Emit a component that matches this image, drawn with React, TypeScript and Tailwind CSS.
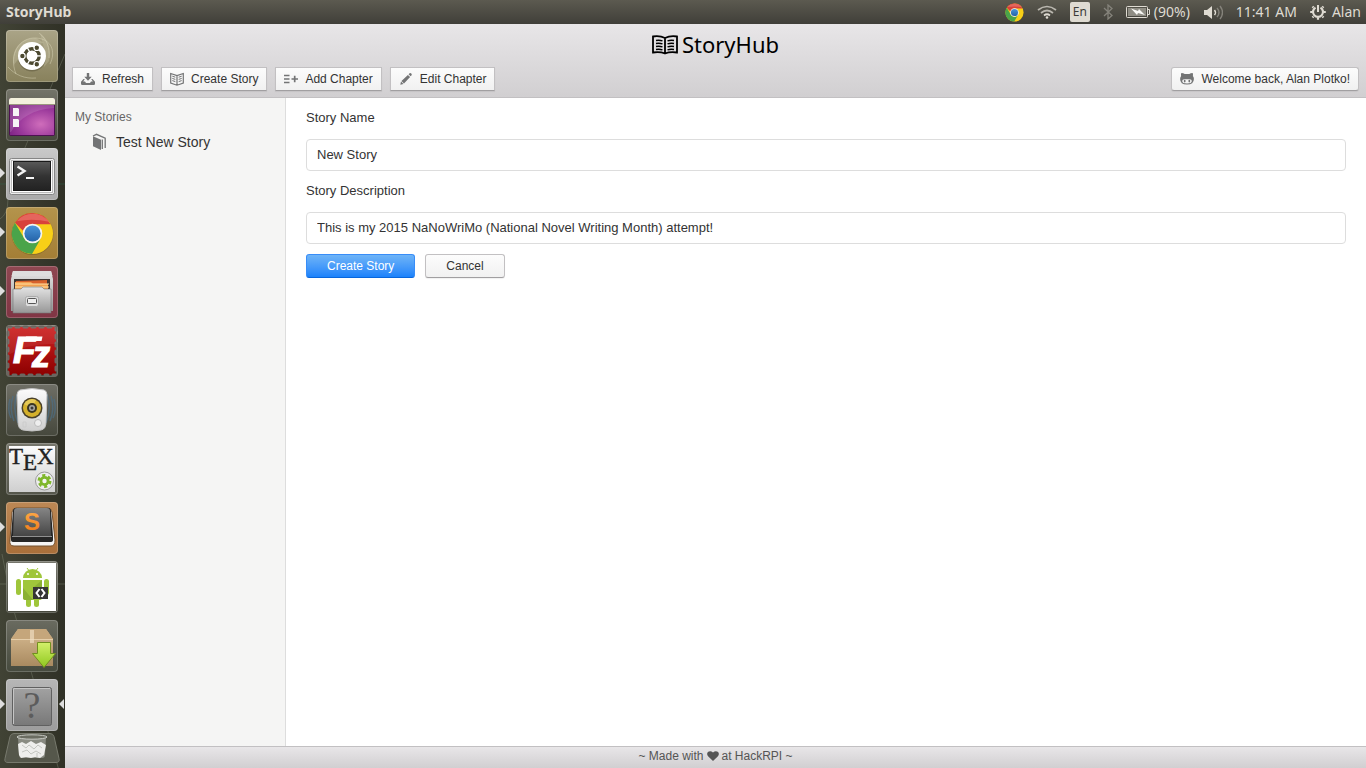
import { useState } from "react";
import type { ReactNode } from "react";

function Chrome({ className = "" }: { className?: string }) {
  return (
    <svg viewBox="0 0 44 44" className={className} aria-hidden="true">
      <circle cx="22" cy="22.500" r="21.500" fill="#5b4a20" opacity=".35" />
      <circle cx="22" cy="22" r="21" fill="#f8cf17" />
      <path d="M4 11A21 21 0 0 1 40.500 12.500H22a10 10 0 0 0-9.500 7z" fill="#d8423a" />
      <path d="M4 11a21 21 0 0 0 17.500 32l8.600-15.200A10 10 0 0 1 13 26z" fill="#4aa44a" />
      <path d="M6 9.500A21 21 0 0 1 39 10q-17-4-33-.5z" fill="#ef7d75" opacity=".6" />
      <circle cx="22" cy="22" r="10" fill="#f4f4f2" />
      <circle cx="22" cy="22" r="8.300" fill="url(#blueBall)" />
    </svg>
  );
}

function Defs() {
  return (
    <svg width="0" height="0" className="absolute" aria-hidden="true">
      <defs>
        <linearGradient id="blueBall" x2="0" y2="1"><stop stopColor="#4a94d8" /><stop offset="1" stopColor="#2463a8" /></linearGradient>
        <radialGradient id="purple" cx=".7" cy=".65" r=".8"><stop stopColor="#cf6dbb" /><stop offset=".6" stopColor="#9c3a9c" /><stop offset="1" stopColor="#7c2382" /></radialGradient>
        <linearGradient id="silver" x2="0" y2="1"><stop stopColor="#e3e3e3" /><stop offset="1" stopColor="#979797" /></linearGradient>
        <linearGradient id="dark" x2="0" y2="1"><stop stopColor="#5a5a5a" /><stop offset=".5" stopColor="#333" /><stop offset="1" stopColor="#222" /></linearGradient>
        <linearGradient id="key" x2="0" y2="1"><stop stopColor="#858585" /><stop offset="1" stopColor="#454545" /></linearGradient>
        <linearGradient id="plate" x2="0" y2="1"><stop stopColor="#a2a2a2" /><stop offset="1" stopColor="#787878" /></linearGradient>
        <linearGradient id="red" x2="0" y2="1"><stop stopColor="#ce2222" /><stop offset="1" stopColor="#8d0000" /></linearGradient>
        <linearGradient id="white" x2="0" y2="1"><stop stopColor="#fcfcfc" /><stop offset="1" stopColor="#cfcfcf" /></linearGradient>
        <linearGradient id="orange" x2="0" y2="1"><stop stopColor="#ffb04e" /><stop offset="1" stopColor="#ee7614" /></linearGradient>
        <linearGradient id="box" x2="0" y2="1"><stop stopColor="#d8bc93" /><stop offset="1" stopColor="#a98a60" /></linearGradient>
        <linearGradient id="lime" x2="0" y2="1"><stop stopColor="#d3f06a" /><stop offset="1" stopColor="#8fc81f" /></linearGradient>
      </defs>
    </svg>
  );
}

function Draw({ children }: { children: ReactNode }) {
  return <svg viewBox="0 0 52 52" className="size-full" aria-hidden="true">{children}</svg>;
}

const DashArt = () => (
  <Draw>
    <g fill="none" stroke="#d6d2b4" strokeOpacity=".5">
      <path d="M10 44C2 24 14 7 30 8s20 14 14 26" />
      <path d="M33 3c8 6 11 15 10 25M2 37c7 8 17 12 28 11" />
    </g>
    <path d="M8 35c-4-16 8-28 22-27l8 5-16 2z" fill="#e2dec2" opacity=".25" />
    <path d="M34 3c8 6 12 16 9 28l-5 6V18z" fill="#e2dec2" opacity=".22" />
    <circle cx="26" cy="27.500" r="14" fill="#4d492f" opacity=".4" />
    <circle cx="26" cy="26" r="14" fill="#fff" />
    <circle cx="26" cy="26" r="7.200" fill="none" stroke="#4c4930" strokeWidth="3.400" />
    <g stroke="#fff" strokeWidth="1.400"><path d="M26 26l9-.1M26 26l-4.500-8M26 26l-4.500 8" /></g>
    <circle cx="26" cy="26" r="5" fill="#fff" />
    <g fill="#4c4930" stroke="#fff" strokeWidth="1.200"><circle cx="16.400" cy="26" r="2.800" /><circle cx="30.800" cy="17.700" r="2.800" /><circle cx="30.800" cy="34.300" r="2.800" /></g>
  </Draw>
);

const DesktopArt = () => (
  <Draw>
    <rect x="3" y="9" width="46" height="38" rx="2" fill="#4d1152" />
    <rect x="4" y="15" width="44" height="31" fill="url(#purple)" />
    <path d="M4 15h44v4C28 20 13 29 5 43H4z" fill="#fff" opacity=".13" />
    <path d="M3 11q0-2 2-2h42q2 0 2 2v4H3z" fill="#f3f1dd" />
    <path d="M3 15.500h46" stroke="#9a977e" />
    <g fill="#f6f3f5"><path d="M7 19h5l1 1v7H7zM7 30h5l1 1v7H7z" /></g>
  </Draw>
);

const TerminalArt = () => (
  <Draw>
    <rect x="3.500" y="10.500" width="45" height="36" rx="2" fill="#eee" stroke="#858585" />
    <rect x="5.500" y="12.500" width="41" height="32" fill="#fff" stroke="#bbb" />
    <rect x="7.500" y="13.500" width="37" height="29" fill="url(#dark)" stroke="#191919" />
    <path d="M11.500 18.500l7 4.500-7 4.500" fill="none" stroke="#f4f4f4" strokeWidth="2.400" />
    <path d="M20 30h8" stroke="#f4f4f4" strokeWidth="2.200" />
  </Draw>
);

const ChromeArt = () => <div className="flex size-full items-center justify-center"><Chrome className="size-[43px]" /></div>;

const FilesArt = () => (
  <Draw>
    <path d="M7 5h38l2 8v32H5V13z" fill="url(#silver)" />
    <path d="M7 5h38l1.500 5h-41z" fill="#dedede" />
    <path d="M8 13h36v13H8z" fill="#3d3532" />
    <path d="M10 15l31-1v8H10z" fill="#d8622c" /><path d="M9 16h16l2 2h15v7H9z" fill="#f4a252" /><path d="M9 18h34M9 21h34" stroke="#ffe1a2" />
    <path d="M7 23h8l2-2h19l2 2h7v24H7z" fill="url(#silver)" stroke="#777" strokeOpacity=".6" />
    <rect x="19.500" y="30.500" width="13" height="10" rx="2" fill="#ddd" stroke="#aaa" />
    <rect x="21.500" y="32.500" width="9" height="5" rx="1" fill="#eee" stroke="#555" />
  </Draw>
);

const FileZillaArt = () => (
  <Draw>
    <rect x="2" y="2" width="48" height="48" fill="url(#red)" />
    <rect x="2" y="2" width="48" height="48" fill="none" stroke="#6c655f" strokeWidth="3" strokeDasharray="3 5" strokeLinecap="round" />
    <path d="M2 2h48v17Q22 18 2 30z" fill="#fff" opacity=".07" />
    <g fill="#fff" stroke="#fff" strokeWidth="1.200" fontFamily="Liberation Sans, sans-serif" fontWeight="bold" fontStyle="italic">
      <text x="7" y="38" fontSize="37">F</text><text x="26" y="42" fontSize="36">z</text>
    </g>
    <path d="M20 11.500h16.500l-1 4.500H19z" fill="#fff" />
  </Draw>
);

const SpeakerArt = () => (
  <Draw>
    <g fill="none" stroke="#4c6f88" strokeWidth="1.500" opacity=".65">
      <path d="M11 10q-5 14 1 29M7 12q-4 13 1 25M4 15q-3 11 1 19M41 10q5 14-1 29M45 12q4 13-1 25M48 15q3 11-1 19" />
    </g>
    <path d="M14 6q12-3 24 0 3 1 3 5l-1 27q0 7-5 8-9 2-18 0-5-1-5-8l-1-27q0-4 3-5z" fill="url(#white)" stroke="#c3c3c3" />
    <circle cx="26" cy="24" r="10.500" fill="#4a412a" /><circle cx="26" cy="24" r="9" fill="#d4b02b" />
    <path d="M26 24l-8-4a9 9 0 0 1 12-4z" fill="#ecd469" opacity=".7" />
    <circle cx="26" cy="24" r="5" fill="#3a3522" /><circle cx="26" cy="24" r="3" fill="#a7a7a3" /><circle cx="26" cy="24" r="1.500" fill="#3a3a38" />
    <circle cx="32" cy="39" r="3.500" fill="#eee" stroke="#bbb" /><path d="M17 38h3v5h-3z" fill="none" stroke="#ccc" />
  </Draw>
);

const TexArt = () => (
  <Draw>
    <rect x="3" y="3" width="46" height="46" fill="url(#white)" />
    <g fill="#222" stroke="#222" strokeWidth=".4" fontFamily="Liberation Serif, serif" fontSize="23">
      <text x="3" y="21">T</text><text x="17" y="27">E</text><text x="31" y="21">X</text>
    </g>
    <circle cx="38.500" cy="38" r="9" fill="#ededed" stroke="#999" />
    <circle cx="38.500" cy="38" r="5" fill="#7fb72c" />
    <circle cx="38.500" cy="38" r="5.500" fill="none" stroke="#7fb72c" strokeWidth="3" strokeDasharray="3 2.760" />
    <circle cx="38.500" cy="38" r="2.200" fill="#f4f4f4" />
  </Draw>
);

const SublimeArt = () => (
  <Draw>
    <path d="M6 10q1-4 4-4h32q3 0 4 4l3 28q0 6-4 6H8q-5 0-4-6z" fill="#f5f5f5" stroke="#73502e" />
    <path d="M7 9q0-3 3-3h32q3 0 3 3l2 25v4q0 2-3 2H8q-3 0-3-2v-4z" fill="#262626" />
    <path d="M8 9q0-3 3-3h30q3 0 3 3l1 25H7z" fill="url(#key)" />
    <path d="M6 34.500h40" stroke="#909090" />
    <text x="26" y="28" textAnchor="middle" fontFamily="Liberation Sans, sans-serif" fontWeight="bold" fontSize="24" fill="url(#orange)">S</text>
  </Draw>
);

const AndroidArt = () => (
  <Draw>
    <path d="M2 2h48v48H2z" fill="#fff" />
    <g fill="#9fc63b">
      <path d="M17 17a9.500 9 0 0 1 19 0z" /><path d="M17 19h19v18q0 2-3 2H20q-3 0-3-2z" />
      <rect x="10" y="18" width="5" height="16" rx="2.500" /><rect x="38" y="18" width="5" height="16" rx="2.500" />
      <rect x="20" y="35" width="5" height="11" rx="2.500" /><rect x="28" y="35" width="5" height="11" rx="2.500" />
    </g>
    <path d="M21 7l3 4M32 7l-3 4" stroke="#9fc63b" />
    <g fill="#fff"><circle cx="22" cy="13" r="1" /><circle cx="31" cy="13" r="1" /></g>
    <path d="M17 27l10 12H20q-3 0-3-2zM28 26l8-7v7z" fill="#7ea42f" opacity=".6" />
    <path d="M27 26h15v12H27z" fill="#353535" />
    <path d="M33.500 28l-3 4 3 4M35.500 28l3 4-3 4" fill="none" stroke="#fff" strokeWidth="2" />
  </Draw>
);

const PackageArt = () => (
  <Draw>
    <path d="M12 9h28l7 10v27H5V19z" fill="url(#box)" />
    <path d="M12 9h28l7 10H5z" fill="#c5a67b" /><path d="M5 19.500h42" stroke="#e6cfab" />
    <path d="M24 10h4v13h-4z" fill="#f1e1c4" opacity=".65" />
    <path d="M31.500 22.500h13v11h5L38 47.500 26.500 33.500h5z" fill="url(#lime)" stroke="#71901e" />
  </Draw>
);

const HelpArt = () => (
  <Draw>
    <rect x="6.500" y="8.500" width="39" height="38" rx="2" fill="url(#plate)" stroke="#606060" />
    <path d="M7.500 45V9.500H44" fill="none" stroke="#c5c5c5" />
    <text x="26" y="39" textAnchor="middle" fontFamily="Liberation Serif, serif" fontSize="38" fill="#5c5c5c">?</text>
  </Draw>
);

type App = { name: string; tint: string; art: () => ReactNode; running?: boolean; focused?: boolean };

const apps: App[] = [
  { name: "Search your computer", tint: "from-[#aaa487] to-[#88815c]", art: DashArt },
  { name: "Show desktop", tint: "from-[#747469] to-[#484a3e]", art: DesktopArt },
  { name: "Terminal", tint: "from-[#c9c9c9] to-[#aaaaaa]", art: TerminalArt, running: true },
  { name: "Chrome", tint: "from-[#b4944c] to-[#a47e35]", art: ChromeArt, running: true },
  { name: "Files", tint: "from-[#8f4751] to-[#803544]", art: FilesArt, running: true },
  { name: "FileZilla", tint: "from-[#77756b] to-[#46483d]", art: FileZillaArt },
  { name: "Music", tint: "from-[#6f6f66] to-[#46483d]", art: SpeakerArt },
  { name: "TeX editor", tint: "from-[#77776d] to-[#55564b]", art: TexArt },
  { name: "Sublime Text", tint: "from-[#bc8855] to-[#a96f3a]", art: SublimeArt, running: true },
  { name: "Android tools", tint: "from-[#77776d] to-[#46483d]", art: AndroidArt },
  { name: "Package installer", tint: "from-[#6a6b60] to-[#464a3e]", art: PackageArt },
  { name: "StoryHub", tint: "from-[#b6b6b6] to-[#9c9c9c]", art: HelpArt, running: true, focused: true },
];

function Launcher() {
  return (
    <nav aria-label="Launcher" className="relative flex w-[65px] shrink-0 flex-col items-center gap-[7px] overflow-hidden bg-linear-to-r from-[#414335] via-[#38392d] to-[#303126] pt-1.5 pr-px">
      <svg className="absolute inset-0 size-full" viewBox="0 0 65 744" preserveAspectRatio="none" aria-hidden="true">
        <g fill="none" stroke="#8b9580" strokeOpacity=".35"><path d="M65 30L18 140M0 195q8-5 8-20M0 560h65M2 530l10 50 48 170" /><path d="M0 160h65" stroke="#28765a" /></g>
      </svg>
      {apps.map(({ name, tint, art: Art, running, focused }) => (
        <div key={name} className="relative flex w-full shrink-0 justify-center">
          {running && <span className="absolute top-5 left-0 border-y-[5px] border-l-[5px] border-y-transparent border-l-[#dedede]" />}
          <button aria-label={name} className={`size-[52px] overflow-hidden rounded-[4px] bg-linear-to-b inset-ring inset-ring-white/20 ${tint}`}><Art /></button>
          {focused && <span className="absolute top-5 right-0 border-y-[5px] border-r-[5px] border-y-transparent border-r-[#dedede]" />}
        </div>
      ))}
      <button aria-label="Trash" className="relative -mt-[5px] h-[30px] w-14 shrink-0">
        <svg viewBox="0 0 56 30" className="size-full" aria-hidden="true">
          <path d="M10 .5h36q3 0 4 3l5 22q1 4-3 4H4q-4 0-3-4l5-22q1-3 4-3z" fill="#55574b" stroke="#77796d" />
          <path d="M14 4h28l-1 18q0 3-3 3H18q-3 0-3-3z" fill="#898b82" />
          <ellipse cx="28" cy="4" rx="15" ry="2.200" fill="#6b6d62" stroke="#c8cac4" />
          <path d="M14 11l4-2 4 2 5-3 5 3 5-2 5 3-2 10-4 3-5-1-4 1-5-1-5 1-2-3z" fill="#eeeeec" />
          <path d="M18 12l4 3 3-3 5 4 4-4 4 3M18 19l5-2 4 4 5-3 5 3M33 20v4" fill="none" stroke="#c3c5c0" />
        </svg>
      </button>
    </nav>
  );
}

function MenuBar() {
  return (
    <header className="flex h-6 shrink-0 items-center justify-between bg-linear-to-b from-[#5c5a50] to-[#403f39] pr-[5px] pl-1.5 font-['Noto_Sans',sans-serif] text-sm text-[#dfdbd2]">
      <span className="font-bold">StoryHub</span>
      <div className="flex items-center gap-[13px]">
        <Chrome className="size-[19px]" />
        <svg width="20" height="14" viewBox="0 0 20 14" fill="none" strokeWidth="1.700" aria-label="Wireless">
          <path d="M1 5q9-7 18 0M4 8q6-5 12 0" stroke="#bab7af" /><path d="M7 10.500q3-2.500 6 0" stroke="#dfdbd2" /><circle cx="10" cy="12.500" r="1.300" fill="#dfdbd2" />
        </svg>
        <span className="flex h-5 w-5 items-center justify-center rounded-xs bg-[#dfdbd2] text-xs text-[#3c3b37]">En</span>
        <svg width="10" height="16" viewBox="0 0 10 16" fill="none" stroke="#85837b" strokeWidth="1.300" aria-label="Bluetooth"><path d="M1 4l8 7.500-4 3.500V1l4 3.500L1 12" /></svg>
        <span className="flex items-center gap-[3px]">
          <svg width="25" height="12" viewBox="0 0 25 12" aria-label="Battery">
            <rect x=".5" y=".5" width="21" height="11" rx="1" fill="none" stroke="#dfdbd2" /><rect x="2" y="2" width="18" height="8" fill="#8f8d84" /><path d="M22 3.500h1.500v5H22" fill="none" stroke="#dfdbd2" /><path d="M5 2.500l7 2.500 1-2 6 6-7-2-1 2z" fill="#f8f8f5" />
          </svg>
          (90%)
        </span>
        <svg width="20" height="15" viewBox="0 0 20 15" fill="none" aria-label="Sound"><path d="M1 5h3l5-4v13l-5-4H1z" fill="#dfdbd2" /><path d="M11.500 5q2 2.500 0 5" stroke="#dfdbd2" strokeWidth="1.400" /><path d="M14 3q4 4.500 0 9M17 1q5 6.500 0 13" stroke="#85837b" strokeWidth="1.400" /></svg>
        <span>11:41 AM</span>
        <span className="flex items-center gap-1.5">
          <svg width="16" height="16" viewBox="0 0 16 16" fill="none" stroke="#dfdbd2" aria-label="System">
            <path d="M5.500 3.600a5 5 0 1 0 5 0" strokeWidth="2.200" /><path d="M8 1v7" strokeWidth="2" /><path d="M3.500 3.500l-1-1M12.500 3.500l1-1M2.500 8H.2M13.500 8h2.300M3.500 12.500l-1 1M12.500 12.500l1 1M8 13.500v2.300" strokeWidth="2.200" />
          </svg>
          Alan
        </span>
      </div>
    </header>
  );
}

function Icon({ children }: { children: ReactNode }) {
  return <svg width="14" height="14" viewBox="0 0 14 14" fill="#737475" className="shrink-0" aria-hidden="true">{children}</svg>;
}

const RefreshIcon = () => <Icon><path d="M5.800 1h2.400v3.800h2.500L7 8.700 3.300 4.800h2.500z" /><path d="M2.500 7L0 9.800v2q0 1.200 1.200 1.200h11.600q1.200 0 1.200-1.200v-2L11.500 7h-1.300l1.600 2.500H10L9 11H5L4 9.500H2.200L3.800 7z" /></Icon>;
const OpenBookIcon = () => <Icon><path d="M.7 1.500L7 3.500l6.300-2v9.500L7 13.200.7 11zM7 3.500v9.700" fill="none" stroke="#737475" strokeWidth="1.200" /><path d="M2.300 4.200l3 1M2.300 6.400l3 1M2.300 8.600l3 1M11.700 4.200l-3 1M11.700 6.400l-3 1M11.700 8.600l-3 1" stroke="#737475" /></Icon>;
const AddListIcon = () => <Icon><path d="M0 3.500h5.500M0 7h5.500M0 10.500h5.500M7.500 7H14M10.700 3.700v6.600" stroke="#737475" strokeWidth="1.700" /></Icon>;
const PencilIcon = () => <Icon><path d="M9.600 2.200l1-1q.9-.5 1.700.3t.3 1.700l-1 1zM8.900 2.900l2.200 2.200-6.100 6.300-2.500-2.500zM2 9.500l2.500 2.500-3.200.8z" /></Icon>;
const CatIcon = () => <Icon><path fillRule="evenodd" d="M1.300 1q2.200 0 3.400 1.100Q7 1.700 9.300 2.100 10.500 1 12.700 1q.5 1.600.2 2.900Q14 5.200 13.900 7q0 5.500-6.900 5.500T.1 7q0-1.800 1-3.100Q.8 2.600 1.300 1zM4.200 7.200Q2.200 7.200 2.200 9q0 2.500 4.800 2.500T11.800 9q0-1.800-2-1.800-2.800.3-5.600 0z" /><ellipse cx="4.700" cy="9.100" rx=".9" ry="1.300" /><ellipse cx="9.300" cy="9.100" rx=".9" ry="1.300" /></Icon>;

const surface = "border border-[#c2c0c2] border-b-[#a19fa1] bg-linear-to-b from-[#fcfcfc] to-[#f1f1f1] text-[#333] shadow-[0_1px_1px_rgba(0,0,0,0.06)]";

function ToolButton({ icon, children, className = "" }: { icon: ReactNode; children: ReactNode; className?: string }) {
  return <button className={`flex h-6 items-center gap-[7px] px-2 text-xs whitespace-nowrap ${surface} ${className}`}>{icon}{children}</button>;
}

function Field({ id, label, initial }: { id: string; label: string; initial: string }) {
  const [value, setValue] = useState(initial);
  return (
    <div className="mb-2.5 flex flex-col gap-[11px]">
      <label htmlFor={id} className="leading-5">{label}</label>
      <input id={id} value={value} onChange={(e) => setValue(e.target.value)} className="h-8 w-full rounded-[4px] border border-[#ddd] bg-white px-2.5 pb-0.5 outline-none" />
    </div>
  );
}

export default function App() {
  return (
    <div className="flex min-h-screen flex-col">
      <Defs />
      <MenuBar />
      <div className="flex flex-1">
        <Launcher />
        <div className="flex min-w-0 flex-1 flex-col bg-white font-['Liberation_Sans',Arial,sans-serif] text-[13px] text-[#333]">
          <header className="flex flex-col border-b border-[#c2c0c2] bg-linear-to-b from-[#e8e6e8] to-[#d1cfd1] pb-1.5">
            <h1 className="flex h-[43px] items-center justify-center gap-1 pb-0.5 font-['Noto_Sans',sans-serif] text-[22px] text-black">
              <svg width="26" height="20" viewBox="0 0 26 20" fill="none" stroke="#000" aria-hidden="true">
                <path d="M13 3Q8 .5 1 1.500v16q7-1 12 1 5-2 12-1v-16Q18 .5 13 3zM13 3v15" strokeWidth="1.800" />
                <path d="M4 5.500q3.500-.6 6.500.4M4 8.500q3.500-.6 6.500.4M4 11.500q3.500-.6 6.500.4M4 14.500q3.500-.6 6.500.4M22 5.500q-3.500-.6-6.500.4M22 8.500q-3.500-.6-6.500.4M22 11.500q-3.500-.6-6.500.4M22 14.500q-3.500-.6-6.500.4" strokeWidth="1.400" />
              </svg>
              StoryHub
            </h1>
            <div className="flex gap-2 px-[7px]">
              <ToolButton icon={<RefreshIcon />}>Refresh</ToolButton>
              <ToolButton icon={<OpenBookIcon />}>Create Story</ToolButton>
              <ToolButton icon={<AddListIcon />}>Add Chapter</ToolButton>
              <ToolButton icon={<PencilIcon />}>Edit Chapter</ToolButton>
              <ToolButton icon={<CatIcon />} className="ml-auto rounded-[3px]">Welcome back, Alan Plotko!</ToolButton>
            </div>
          </header>
          <div className="flex flex-1">
            <aside className="w-[221px] shrink-0 border-r border-[#ddd] bg-[#f5f5f4] pt-[9px]">
              <h2 className="px-2.5 text-xs leading-5 text-[#666]">My Stories</h2>
              <a href="#story" className="flex h-[29px] items-center gap-2 pl-[27px] text-sm">
                <svg width="16" height="18" viewBox="0 0 16 18" aria-hidden="true"><path d="M1 3.200l8 3.600V17l-8-3.700z" fill="#737475" /><path d="M1 3l3.500-1.700 8.700 3.800V15M10.300 6.500V16" fill="none" stroke="#737475" strokeWidth="1.300" /></svg>
                Test New Story
              </a>
            </aside>
            <main className="min-w-0 flex-1 px-5 pt-2.5">
              <form onSubmit={(e) => e.preventDefault()}>
                <Field id="name" label="Story Name" initial="New Story" />
                <Field id="description" label="Story Description" initial="This is my 2015 NaNoWriMo (National Novel Writing Month) attempt!" />
                <div className="flex gap-2.5 text-xs">
                  <button type="submit" className="h-6 rounded-[3px] border border-[#388df8] border-b-[#0866dc] bg-linear-to-b from-[#6eb4f7] to-[#1a82fb] px-5 text-white">Create Story</button>
                  <button type="button" className={`h-6 rounded-[3px] px-5 ${surface}`}>Cancel</button>
                </div>
              </form>
            </main>
          </div>
          <footer className="flex h-[22px] items-center justify-center gap-[3px] border-t border-[#c2c0c2] bg-linear-to-b from-[#e8e6e8] to-[#d1cfd1] pb-1 text-xs text-[#555]">
            <span>~ Made with</span>
            <svg width="12" height="10" viewBox="0 0 12 10" aria-label="love"><path d="M6 10L1.300 5.500Q-.8 3 .9 1.100 3.300-1 6 1.500 8.700-1 11.100 1.100q1.700 1.900-.4 4.400z" fill="#555" /></svg>
            <span>at HackRPI ~</span>
          </footer>
        </div>
      </div>
    </div>
  );
}
